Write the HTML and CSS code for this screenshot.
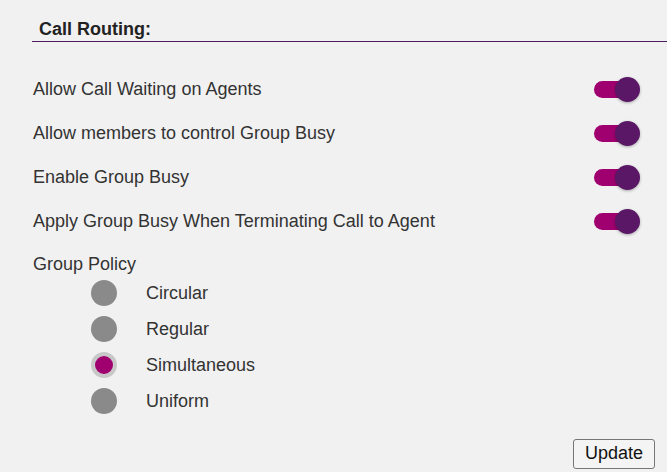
FILE: index.html
```html
<!DOCTYPE html>
<html lang="en">
<head>
    <meta charset="UTF-8">
    <meta name="viewport" content="width=device-width, initial-scale=1.0">
    <title>Call Routing</title>
    <link rel="stylesheet" href="styles.css">
</head>
<body>
    <div class="container">
        <div class="section-title">Call Routing:</div>

        <div class="setting-row">
            <span class="label">Allow Call Waiting on Agents</span>
            <span class="toggle on"><span class="thumb"></span></span>
        </div>
        <div class="setting-row">
            <span class="label">Allow members to control Group Busy</span>
            <span class="toggle on"><span class="thumb"></span></span>
        </div>
        <div class="setting-row">
            <span class="label">Enable Group Busy</span>
            <span class="toggle on"><span class="thumb"></span></span>
        </div>
        <div class="setting-row">
            <span class="label">Apply Group Busy When Terminating Call to Agent</span>
            <span class="toggle on"><span class="thumb"></span></span>
        </div>

        <div class="policy">
            <div class="label">Group Policy</div>
            <div class="radio-list">
                <div class="radio-row"><span class="radio"></span><span class="label">Circular</span></div>
                <div class="radio-row"><span class="radio"></span><span class="label">Regular</span></div>
                <div class="radio-row"><span class="radio checked"></span><span class="label">Simultaneous</span></div>
                <div class="radio-row"><span class="radio"></span><span class="label">Uniform</span></div>
            </div>
        </div>

        <div class="actions">
            <button class="update-btn">Update</button>
        </div>
    </div>
</body>
</html>
```

FILE: styles.css
```css
body {
    margin: 0;
    padding: 0;
    background: #f1f1f1;
    font-family: "Liberation Sans", Arial, sans-serif;
    color: #333;
}
.container {
    padding: 19px 27px 0 33px;
}
.section-title {
    margin-left: -1px;
    margin-right: -27px;
    padding: 0 0 1px 7px;
    font-size: 18px;
    line-height: 21px;
    font-weight: bold;
    color: #222;
    border-bottom: 1px solid #4b1d5e;
}
.setting-row {
    display: flex;
    align-items: center;
    justify-content: space-between;
    height: 44px;
}
.section-title + .setting-row {
    margin-top: 25px;
}
.label {
    font-size: 18px;
    color: #333;
}
.toggle {
    position: relative;
    width: 34px;
    height: 17px;
    margin-right: 12px;
    border-radius: 9px;
    background: #a0006f;
}
.toggle .thumb {
    position: absolute;
    left: 21px;
    top: -4px;
    width: 25px;
    height: 25px;
    border-radius: 50%;
    background: #5a1766;
    box-shadow: 0 1px 3px rgba(0, 0, 0, 0.3);
}
.policy {
    margin-top: 10px;
}
.policy > .label {
    line-height: 22px;
}
.radio-list {
    padding-left: 58px;
}
.radio-row {
    display: flex;
    align-items: center;
    height: 36px;
}
.radio {
    box-sizing: border-box;
    width: 26px;
    height: 26px;
    margin-right: 29px;
    border-radius: 50%;
    background: #8a8a8a;
}
.radio.checked {
    background: #a0006f;
    border: 4px solid #c8c8c8;
}
.actions {
    display: flex;
    justify-content: flex-end;
    margin-top: 20px;
    margin-right: -15px;
}
.update-btn {
    font-family: "Liberation Sans", Arial, sans-serif;
    font-size: 18px;
    color: #111;
    padding: 3px 11px 4px;
    background: #f4f4f4;
    border: 1px solid #767676;
    border-radius: 3px;
}
```
